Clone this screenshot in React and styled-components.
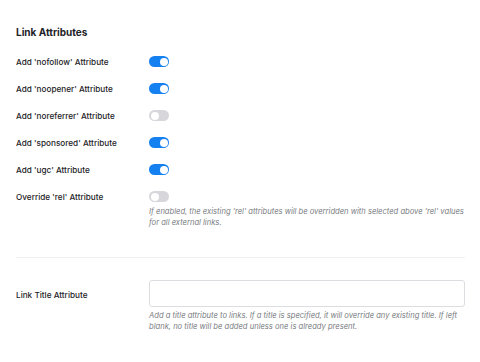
import React from "react";
import styled, { createGlobalStyle } from "styled-components";

const Global = createGlobalStyle`
  html, body { margin: 0; padding: 0; background: #ffffff; }
  body { font-family: Inter, "Liberation Sans", Arial, sans-serif; -webkit-font-smoothing: antialiased; }
`;

const Page = styled.div`
  width: 480px;
  height: 362px;
  box-sizing: border-box;
  padding: 25px 15px 0 16px;
  background: #fff;
  overflow: hidden;
`;

const Heading = styled.h2`
  margin: 0 0 9px;
  font-size: 10px;
  line-height: 14px;
  font-weight: 700;
  color: #1d2327;
`;

const Row = styled.div`
  display: grid;
  grid-template-columns: 133px 1fr;
  align-items: ${(p) => (p.$top ? "start" : "center")};
  min-height: 27px;
`;

const Label = styled.div`
  font-size: 8.2px;
  font-weight: 500;
  color: #1d2327;
  line-height: 12px;
`;

const OverrideLabel = styled(Label)`
  padding-top: 7.5px;
`;

const Toggle = styled.span`
  position: relative;
  display: inline-block;
  width: 20px;
  height: 11px;
  border-radius: 6px;
  background: ${(p) => (p.$on ? "#1581f1" : "#d6d6db")};
  &::after {
    content: "";
    position: absolute;
    top: 1.5px;
    left: ${(p) => (p.$on ? "10.5px" : "1.5px")};
    width: 8px;
    height: 8px;
    border-radius: 50%;
    background: #fff;
  }
`;

const Cell = styled.div`
  display: flex;
  flex-direction: column;
  align-items: flex-start;
  padding-top: ${(p) => p.$pt || "0"};
`;

const Help = styled.p`
  margin: ${(p) => p.$mt || "5px"} 0 0;
  font-size: 7.6px;
  line-height: 11.5px;
  font-style: italic;
  color: #7a7d82;
`;

const Divider = styled.hr`
  border: 0;
  border-top: 1px solid #eeeff0;
  margin: 28px 0 0;
`;

const TitleRow = styled.div`
  display: grid;
  grid-template-columns: 133px 1fr;
  margin-top: 22px;
`;

const TitleLabel = styled(Label)`
  padding-top: 9.5px;
`;

const Input = styled.input`
  box-sizing: border-box;
  width: 316px;
  height: 27px;
  border: 1px solid #dcdde0;
  border-radius: 3px;
  background: #fff;
  outline: none;
  margin: 0;
`;

const toggles = [
  ["Add 'nofollow' Attribute", true],
  ["Add 'noopener' Attribute", true],
  ["Add 'noreferrer' Attribute", false],
  ["Add 'sponsored' Attribute", true],
  ["Add 'ugc' Attribute", true],
];

export default function App() {
  return (
    <Page>
      <Global />
      <Heading>Link Attributes</Heading>
      {toggles.map(([label, on]) => (
        <Row key={label}>
          <Label>{label}</Label>
          <Cell>
            <Toggle $on={on} />
          </Cell>
        </Row>
      ))}
      <Row $top>
        <OverrideLabel>Override 'rel' Attribute</OverrideLabel>
        <Cell $pt="8px">
          <Toggle $on={false} />
          <Help $mt="3.5px">
            If enabled, the existing 'rel' attributes will be overridden with selected above 'rel' values
            for all external links.
          </Help>
        </Cell>
      </Row>
      <Divider />
      <TitleRow>
        <TitleLabel>Link Title Attribute</TitleLabel>
        <Cell>
          <Input type="text" />
          <Help $mt="3px">
            Add a title attribute to links. If a title is specified, it will override any existing title. If left
            blank, no title will be added unless one is already present.
          </Help>
        </Cell>
      </TitleRow>
    </Page>
  );
}
